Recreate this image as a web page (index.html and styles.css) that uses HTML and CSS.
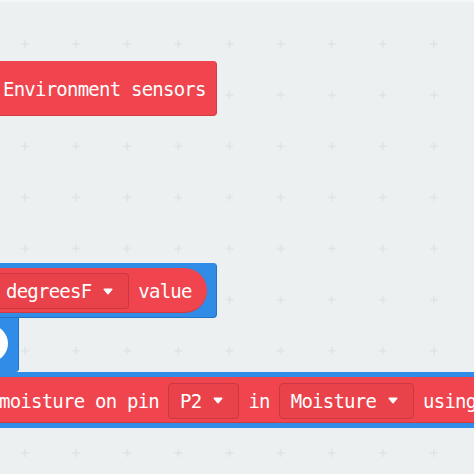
FILE: index.html
```html
<!DOCTYPE html>
<html lang="en">
<head>
    <meta charset="UTF-8">
    <title>Blocks</title>
    <link rel="stylesheet" href="styles.css">
</head>
<body>
    <div class="workspace">
        <svg class="grid" width="474" height="474">
            <defs>
                <pattern id="dots" patternUnits="userSpaceOnUse" x="-0.56" y="18.44" width="51.125" height="51.125">
                    <path d="M21.5 25.5 H29.5 M25.5 21.5 V29.5" stroke="#d9dee1" stroke-width="1"/>
                </pattern>
            </defs>
            <rect width="474" height="474" fill="url(#dots)"/>
        </svg>
        <div class="topbar"></div>

        <div class="block heading">Environment sensors</div>

        <div class="stack">
            <div class="outer top-part">
                <div class="reporter">
                    <span class="dropdown first">degreesF
                        <svg class="caret" viewBox="0 0 10 7"><path d="M1.2 1.2 H8.8 L5 5.8 Z"/></svg>
                    </span>
                    <span class="label">value</span>
                </div>
            </div>
            <div class="arm"><span class="slot"></span></div>
            <div class="outer strip">
                <div class="statement">
                    <span class="label">moisture on pin</span>
                    <span class="dropdown">P2
                        <svg class="caret" viewBox="0 0 10 7"><path d="M1.2 1.2 H8.8 L5 5.8 Z"/></svg>
                    </span>
                    <span class="label">in</span>
                    <span class="dropdown">Moisture
                        <svg class="caret" viewBox="0 0 10 7"><path d="M1.2 1.2 H8.8 L5 5.8 Z"/></svg>
                    </span>
                    <span class="label">using</span>
                </div>
            </div>
        </div>
    </div>
</body>
</html>
```

FILE: styles.css
```css
body {
    margin: 0;
    background-color: #ecf0f1;
    font-family: "DejaVu Sans Mono", "Liberation Mono", monospace;
}
.workspace {
    position: relative;
    width: 474px;
    height: 474px;
    overflow: hidden;
    background-color: #ecf0f1;
}
.grid {
    position: absolute;
    top: 0;
    left: 0;
}
.topbar {
    position: absolute;
    top: 0;
    left: 0;
    right: 0;
    height: 2px;
    background-color: #f5f7f8;
}

/* blocks sit on the free canvas */
.block {
    position: absolute;
}
.heading {
    top: 61px;
    left: -9px;
    height: 55px;
    box-sizing: border-box;
    padding: 2px 10px 0 12px;
    display: flex;
    align-items: center;
    background-color: #f0444e;
    border-bottom: 1px solid #cf3a43;
    border-right: 1px solid #d63c45;
    border-radius: 4px;
    color: white;
    font-size: 19px;
    letter-spacing: -0.77px;
    white-space: nowrap;
}

.stack {
    position: absolute;
    top: 263px;
    left: -20px;
    display: flex;
    flex-direction: column;
    align-items: flex-start;
}
.outer {
    background-color: #318ce7;
    box-sizing: border-box;
    padding: 5px 9px 5px 0;
}
.top-part {
    height: 55px;
    border-radius: 0 4px 4px 0;
    border-right: 1px solid #2472c4;
    border-bottom: 1px solid #2472c4;
}
.arm {
    position: relative;
    width: 39px;
    height: 54px;
    background-color: #318ce7;
    border-right: 1px solid #2472c4;
    box-sizing: border-box;
    border-bottom-right-radius: 4px;
    overflow: hidden;
}
.slot {
    position: absolute;
    top: 7px;
    left: -9px;
    width: 37px;
    height: 37px;
    border-radius: 50%;
    background-color: white;
}
.strip {
    width: 600px;
    height: 56px;
    padding-right: 0;
}

.reporter, .statement {
    display: flex;
    align-items: center;
    gap: 9px;
    background-color: #f0444e;
    color: white;
    font-size: 19px;
    letter-spacing: -0.77px;
    white-space: nowrap;
    box-sizing: border-box;
}
.reporter {
    height: 45px;
    padding-top: 2px;
    padding-right: 15px;
    border-radius: 0 22.5px 22.5px 0;
    border-bottom: 1px solid #cf3a43;
}
.statement {
    height: 46px;
    padding-top: 2px;
    padding-left: 19px;
    border-bottom: 1px solid #cf3a43;
}
.dropdown {
    display: flex;
    align-items: center;
    height: 36px;
    box-sizing: border-box;
    padding: 0 15px 0 11px;
    gap: 12px;
    background-color: #ea424b;
    border: 1px solid #cc3841;
    border-radius: 4px;
}
.dropdown.first {
    padding-left: 26px;
    border-left: none;
    border-radius: 0 4px 4px 0;
}
.caret {
    width: 10px;
    height: 7px;
}
.caret path {
    fill: white;
    stroke: white;
    stroke-width: 1.4;
    stroke-linejoin: round;
}
```
